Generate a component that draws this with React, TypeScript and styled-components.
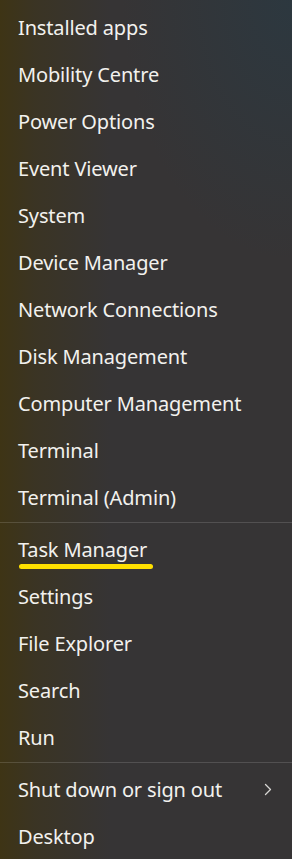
import React from "react";
import styled, { createGlobalStyle } from "styled-components";

const Global = createGlobalStyle`
  html, body { margin: 0; padding: 0; background: #363435; }
  #root { width: 292px; height: 859px; }
`;

const Menu = styled.div`
  width: 292px;
  height: 859px;
  box-sizing: border-box;
  padding-top: 4px;
  overflow: hidden;
  display: flex;
  flex-direction: column;
  background:
    radial-gradient(ellipse 170px 260px at 100% 0%, rgba(44, 56, 64, 0.95) 0%, rgba(44, 56, 64, 0) 100%),
    linear-gradient(to right, #3e3415 0%, rgba(60, 52, 30, 0.75) 12%, rgba(54, 52, 53, 0) 38%),
    #363435;
  font-family: "Noto Sans", "Open Sans", sans-serif;
`;

const Item = styled.div`
  height: 47px;
  flex: 0 0 47px;
  display: flex;
  align-items: center;
  justify-content: space-between;
  padding: 0 20px 0 18px;
  color: #f2f1ee;
  font-size: 20px;
  letter-spacing: -0.15px;
  white-space: nowrap;
`;

const Label = styled.span<{ $marked?: boolean }>`
  position: relative;
  ${(p) =>
    p.$marked &&
    `
    &::after {
      content: "";
      position: absolute;
      left: 1px;
      right: -6px;
      bottom: -6px;
      height: 5px;
      border-radius: 3px;
      background: #ffe000;
    }
  `}
`;

const Divider = styled.div`
  height: 1px;
  flex: 0 0 1px;
  margin-top: 1px;
  margin-bottom: 3px;
  background: rgba(255, 255, 255, 0.14);
`;

const Chevron = () => (
  <svg width="8" height="13" viewBox="0 0 8 13" fill="none">
    <path d="M1.5 1.5 L6.5 6.5 L1.5 11.5" stroke="#d8d6d4" strokeWidth="1.3" strokeLinecap="round" strokeLinejoin="round" />
  </svg>
);

const group1 = [
  "Installed apps",
  "Mobility Centre",
  "Power Options",
  "Event Viewer",
  "System",
  "Device Manager",
  "Network Connections",
  "Disk Management",
  "Computer Management",
  "Terminal",
  "Terminal (Admin)",
];
const group2 = ["Task Manager", "Settings", "File Explorer", "Search", "Run"];

export default function App() {
  return (
    <>
      <Global />
      <Menu>
        {group1.map((t) => (
          <Item key={t}>
            <Label>{t}</Label>
          </Item>
        ))}
        <Divider />
        {group2.map((t) => (
          <Item key={t}>
            <Label $marked={t === "Task Manager"}>{t}</Label>
          </Item>
        ))}
        <Divider />
        <Item>
          <Label>Shut down or sign out</Label>
          <Chevron />
        </Item>
        <Item>
          <Label>Desktop</Label>
        </Item>
      </Menu>
    </>
  );
}
